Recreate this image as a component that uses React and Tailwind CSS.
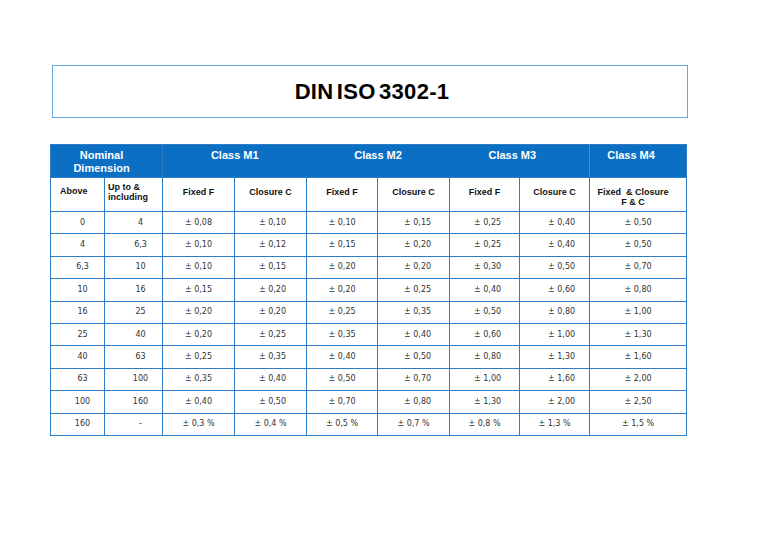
import React from 'react'

const rows = [
  ['0', '4', '± 0,08', '± 0,10', '± 0,10', '± 0,15', '± 0,25', '± 0,40', '± 0,50'],
  ['4', '6,3', '± 0,10', '± 0,12', '± 0,15', '± 0,20', '± 0,25', '± 0,40', '± 0,50'],
  ['6,3', '10', '± 0,10', '± 0,15', '± 0,20', '± 0,20', '± 0,30', '± 0,50', '± 0,70'],
  ['10', '16', '± 0,15', '± 0,20', '± 0,20', '± 0,25', '± 0,40', '± 0,60', '± 0,80'],
  ['16', '25', '± 0,20', '± 0,20', '± 0,25', '± 0,35', '± 0,50', '± 0,80', '± 1,00'],
  ['25', '40', '± 0,20', '± 0,25', '± 0,35', '± 0,40', '± 0,60', '± 1,00', '± 1,30'],
  ['40', '63', '± 0,25', '± 0,35', '± 0,40', '± 0,50', '± 0,80', '± 1,30', '± 1,60'],
  ['63', '100', '± 0,35', '± 0,40', '± 0,50', '± 0,70', '± 1,00', '± 1,60', '± 2,00'],
  ['100', '160', '± 0,40', '± 0,50', '± 0,70', '± 0,80', '± 1,30', '± 2,00', '± 2,50'],
  ['160', '-', '± 0,3 %', '± 0,4 %', '± 0,5 %', '± 0,7 %', '± 0,8 %', '± 1,3 %', '± 1,5 %'],
]

const widths = ['w-[54px]', 'w-[58px]', 'w-[72px]', 'w-[72px]', 'w-[71px]', 'w-[72px]', 'w-[70px]', 'w-[70px]', 'w-[97px]']

// small nudges seen in the scan, numeric rows only
const nudge = ['pl-[10px]', 'pl-[14px]', '', 'pl-[4px]', '', 'pl-[8px]', 'pl-[6px]', 'pl-[14px]', '']

const cell = 'border border-[#2f7dc6] align-middle'

export default function App() {
  return (
    <div className="w-[768px] h-[543px] bg-white pt-[65px] pl-[52px] font-['Liberation_Sans',Arial,sans-serif]">
      <div className="w-[636px] h-[53px] border border-[#6aa6dc] flex items-center justify-center">
        <h1 className="text-[22px] font-bold text-black tracking-[0.3px] [word-spacing:-3px] pl-[4px]">DIN ISO 3302-1</h1>
      </div>

      <table className="mt-[26px] -ml-[2px] border-collapse table-fixed w-[637px]">
        <colgroup>
          {widths.map((w, i) => (
            <col key={i} className={w} />
          ))}
        </colgroup>
        <thead>
          <tr className="h-[33px] bg-[#0b6fc3] text-white text-[11px] font-bold leading-[13px]">
            <th colSpan={2} className="border border-[#2f7dc6] align-top pt-[4px] pr-[10px] text-center">
              Nominal
              <br />
              Dimension
            </th>
            <th colSpan={2} className="border-y border-[#2f7dc6] align-top pt-[4px] text-center">Class M1</th>
            <th colSpan={2} className="border-y border-[#2f7dc6] align-top pt-[4px] text-center">Class M2</th>
            <th colSpan={2} className="border-y border-l-0 border-[#2f7dc6] align-top pt-[4px] pr-[14px] text-center">Class M3</th>
            <th className="border border-l-[#4d8fd0] border-[#2f7dc6] align-top pt-[4px] pr-[14px] text-center">Class M4</th>
          </tr>
          <tr className="h-[34px] text-[9px] font-bold text-[#111] leading-[10px]">
            <th className={`${cell} !align-top pt-[8px] pl-[9px] text-left`}>Above</th>
            <th className={`${cell} !align-top pt-[4px] pl-[3px] text-left`}>
              Up to &amp;
              <br />
              including
            </th>
            <th className={`${cell} !align-top pt-[9px] text-center`}>Fixed F</th>
            <th className={`${cell} !align-top pt-[9px] text-center`}>Closure C</th>
            <th className={`${cell} !align-top pt-[9px] text-center`}>Fixed F</th>
            <th className={`${cell} !align-top pt-[9px] text-center`}>Closure C</th>
            <th className={`${cell} !align-top pt-[9px] text-center`}>Fixed F</th>
            <th className={`${cell} !align-top pt-[9px] text-center`}>Closure C</th>
            <th className={`${cell} !align-top pt-[9px] pr-[10px] text-center`}>
              Fixed &nbsp;&amp; Closure
              <br />
              F &amp; C
            </th>
          </tr>
        </thead>
        <tbody className="font-['DejaVu_Sans',Verdana,sans-serif] text-[8px] text-[#333]">
          {rows.map((r, i) => (
            <tr key={i} className="h-[22.4px]">
              {r.map((v, j) => (
                <td
                  key={j}
                  className={`${cell} text-center ${i < rows.length - 1 ? nudge[j] : j < 2 ? nudge[j] : ''}`}
                >
                  {v}
                </td>
              ))}
            </tr>
          ))}
        </tbody>
      </table>
    </div>
  )
}
